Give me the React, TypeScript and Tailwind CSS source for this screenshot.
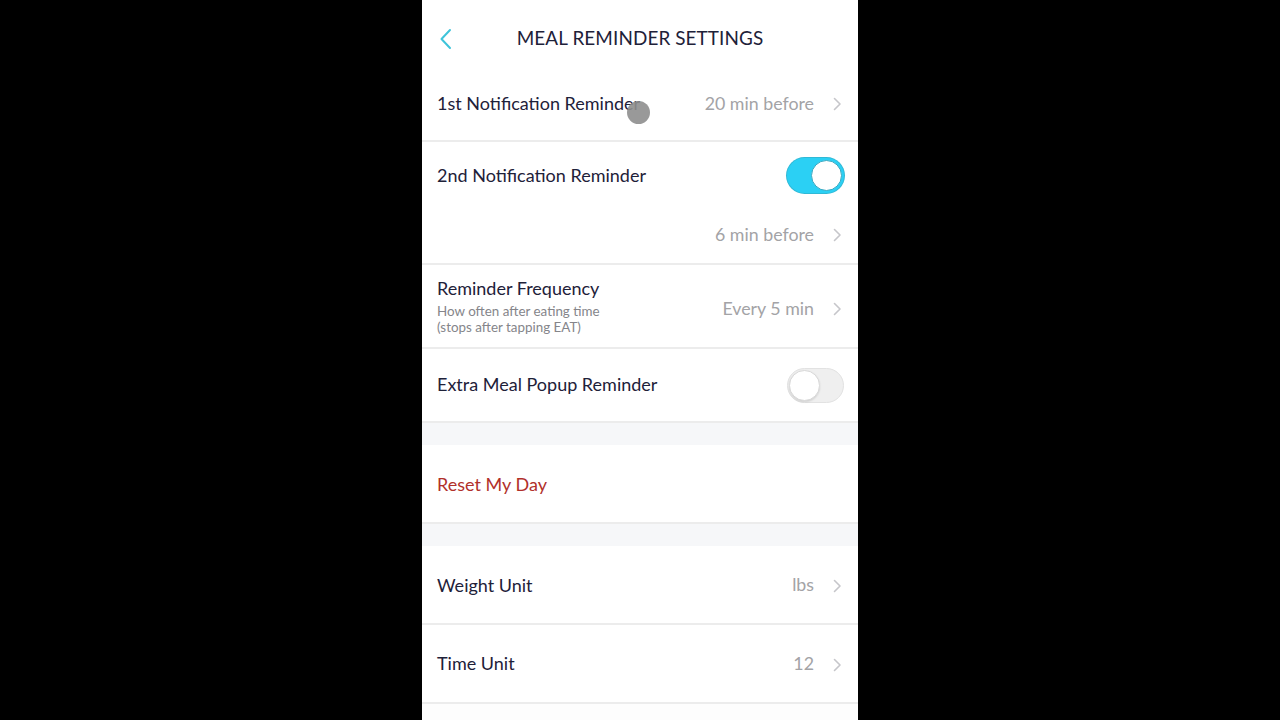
import React from "react";

const font = { fontFamily: "Lato, 'Noto Sans', sans-serif" };

function Chevron() {
  return (
    <svg width="9" height="14" viewBox="0 0 9 14" className="ml-[19px] shrink-0 mt-[2px]">
      <path d="M1.5 1.5 L7 7 L1.5 12.5" fill="none" stroke="#c6c6ca" strokeWidth="1.6" strokeLinecap="round" strokeLinejoin="round" />
    </svg>
  );
}

function Toggle({ on }: { on: boolean }) {
  return on ? (
    <div className="w-[57px] h-[35px] rounded-full bg-[#2bd0f4] relative shrink-0 shadow-[0_0_0_1px_#30b9d6]">
      <div className="absolute right-[2px] top-[2px] w-[31px] h-[31px] rounded-full bg-white border border-[#3aa9c2]" />
    </div>
  ) : (
    <div className="w-[57px] h-[35px] rounded-full bg-[#efefef] border border-[#e2e2e2] relative shrink-0">
      <div className="absolute left-[1px] top-[1px] w-[31px] h-[31px] rounded-full bg-white border border-[#d9d9d9] shadow-[0_1px_2px_rgba(0,0,0,0.12)]" />
    </div>
  );
}

function Value({ children }: { children: React.ReactNode }) {
  return (
    <div className="flex items-center text-[17.8px] text-[#a3a3a6]">
      <span>{children}</span>
      <Chevron />
    </div>
  );
}

export default function App() {
  return (
    <div className="w-[1280px] h-[720px] bg-black flex justify-center overflow-hidden" style={font}>
      <div className="w-[436px] h-full bg-white flex flex-col relative">
        {/* header */}
        <div className="h-[66px] shrink-0 pt-[11px] flex items-center relative">
          <svg width="14" height="22" viewBox="0 0 14 22" className="absolute left-[17px] top-[28px]">
            <path d="M11 2 L2.5 11 L11 20" fill="none" stroke="#3ec4da" strokeWidth="2" strokeLinecap="round" strokeLinejoin="round" />
          </svg>
          <div className="w-full text-center text-[18.9px] text-[#1e2139] tracking-[0.1px]">MEAL REMINDER SETTINGS</div>
        </div>

        {/* 1st notification */}
        <div className="h-[76px] shrink-0 border-b-2 border-[#ececec] flex items-center justify-between pl-[15px] pr-[16px]">
          <span className="text-[18px] text-[#1e2139]">1st Notification Reminder</span>
          <Value>20 min before</Value>
        </div>

        {/* 2nd notification */}
        <div className="h-[123px] shrink-0 border-b-2 border-[#ececec] flex flex-col pl-[15px]">
          <div className="h-[66px] flex items-center justify-between pr-[14px]">
            <span className="text-[18px] text-[#1e2139]">2nd Notification Reminder</span>
            <Toggle on />
          </div>
          <div className="h-[52px] flex items-center justify-end pr-[16px]">
            <Value>6 min before</Value>
          </div>
        </div>

        {/* frequency */}
        <div className="h-[84px] shrink-0 border-b-2 border-[#ececec] flex items-center justify-between pl-[15px] pr-[16px]">
          <div className="flex flex-col">
            <span className="text-[18px] text-[#1e2139] leading-[22px]">Reminder Frequency</span>
            <span className="text-[13.4px] text-[#85858a] leading-[16px] mt-[4px]">How often after eating time</span>
            <span className="text-[13.4px] text-[#85858a] leading-[16px]">(stops after tapping EAT)</span>
          </div>
          <div className="mt-[4px]">
            <Value>Every 5 min</Value>
          </div>
        </div>

        {/* extra meal popup */}
        <div className="h-[74px] shrink-0 border-b-2 border-[#ececec] flex items-center justify-between pl-[15px] pr-[14px]">
          <span className="text-[18px] text-[#1e2139] -mt-[2px]">Extra Meal Popup Reminder</span>
          <Toggle on={false} />
        </div>

        <div className="h-[22px] shrink-0 bg-[#f6f7f9]" />

        {/* reset */}
        <div className="h-[79px] shrink-0 border-b-2 border-[#ececec] flex items-center pl-[15px]">
          <span className="text-[18px] text-[#b1302a] mt-[1px]">Reset My Day</span>
        </div>

        <div className="h-[22px] shrink-0 bg-[#f6f7f9]" />

        {/* units */}
        <div className="h-[79px] shrink-0 border-b-2 border-[#ececec] flex items-center justify-between pl-[15px] pr-[16px]">
          <span className="text-[18px] text-[#1e2139] mt-[1px]">Weight Unit</span>
          <Value>lbs</Value>
        </div>
        <div className="h-[79px] shrink-0 border-b-2 border-[#ececec] flex items-center justify-between pl-[15px] pr-[16px]">
          <span className="text-[18px] text-[#1e2139]">Time Unit</span>
          <Value>12</Value>
        </div>
        <div className="flex-1 bg-[#fdfdfd]" />

        {/* touch indicator */}
        <div className="absolute left-[205px] top-[101px] w-[23px] h-[23px] rounded-full bg-[#8e8e8e] opacity-90" />
      </div>
    </div>
  );
}
